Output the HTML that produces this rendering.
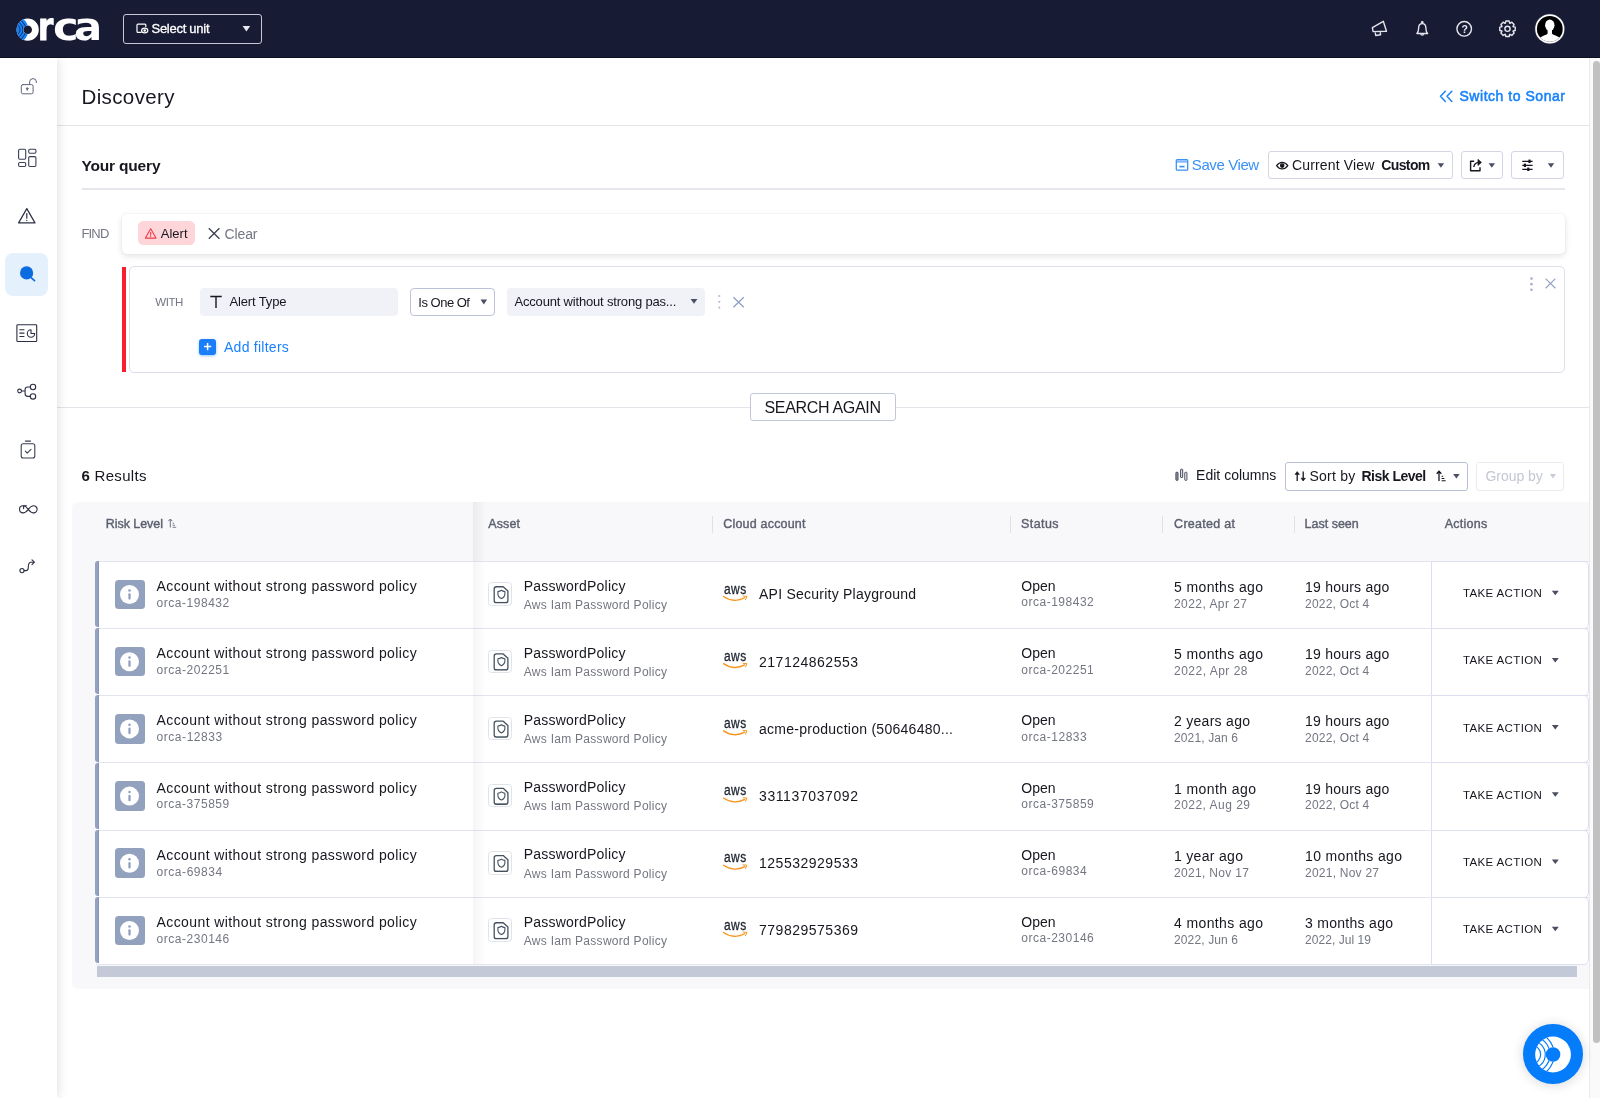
<!DOCTYPE html>
<html lang="en"><head><meta charset="utf-8"><title>Orca Security - Discovery</title>
<style>
*{box-sizing:border-box;margin:0;padding:0}
html,body{width:1600px;height:1098px;overflow:hidden;background:#fff}
body{position:relative;font-family:"Liberation Sans",sans-serif;color:#1f2235}
.t{position:absolute;white-space:pre;display:block}
.b{position:absolute;display:block}
svg.ov{position:absolute;left:0;top:0;width:1600px;height:1098px;pointer-events:none;overflow:visible}
.tl{position:absolute;left:0;top:0;width:1600px;height:1098px;will-change:transform}

</style></head>
<body>
<div class="b" style="left:57.00px;top:125.00px;width:1533.00px;height:1.00px;background:#e3e4e9"></div>
<div class="b" style="left:82.00px;top:188.00px;width:1483.00px;height:1.50px;background:#e6e7ec"></div>
<div class="b" style="left:57.00px;top:407.00px;width:1533.00px;height:1.00px;background:#e3e4e9"></div>
<div class="b" style="left:1589.30px;top:58.00px;width:10.70px;height:1040.00px;background:#fafafa;border-left:1px solid #ebebeb"></div>
<div class="b" style="left:1593.00px;top:61.00px;width:7.20px;height:982.00px;background:#c1c1c1;border-radius:3.6px"></div>
<div class="b" style="left:1267.60px;top:151.00px;width:185.80px;height:27.80px;background:#fff;border:1px solid #d3d6e2;border-radius:3px"></div>
<div class="b" style="left:1461.30px;top:151.00px;width:42.00px;height:27.80px;background:#fff;border:1px solid #d3d6e2;border-radius:3px"></div>
<div class="b" style="left:1511.20px;top:151.00px;width:53.30px;height:27.80px;background:#fff;border:1px solid #d3d6e2;border-radius:3px"></div>
<div class="b" style="left:122.00px;top:214.00px;width:1443.00px;height:39.50px;background:#fff;border-radius:5px;box-shadow:0 2px 6px rgba(20,20,40,.12),0 0 2px rgba(20,20,40,.05)"></div>
<div class="b" style="left:138.00px;top:221.30px;width:56.60px;height:23.80px;background:#fed6d9;border-radius:5.5px"></div>
<div class="b" style="left:122.00px;top:267.00px;width:3.50px;height:105.00px;background:#fa1e2e"></div>
<div class="b" style="left:129.00px;top:266.30px;width:1436.00px;height:106.40px;background:#fff;border:1px solid #dcdee8;border-radius:5px"></div>
<div class="b" style="left:200.00px;top:288.00px;width:197.50px;height:27.50px;background:#f0f2f7;border-radius:4px"></div>
<div class="b" style="left:410.00px;top:288.00px;width:84.50px;height:27.50px;background:#fff;border:1px solid #bcc3d8;border-radius:4px"></div>
<div class="b" style="left:507.00px;top:288.00px;width:198.00px;height:27.50px;background:#f0f2f7;border-radius:4px"></div>
<div class="b" style="left:199.30px;top:338.80px;width:16.50px;height:15.80px;background:#1a7efb;border-radius:3px;box-shadow:0 1px 3px rgba(26,126,251,.45)"></div>
<div class="b" style="left:750.30px;top:393.00px;width:146.00px;height:28.30px;background:#fff;border:1px solid #c2c7da;border-radius:3px"></div>
<div class="b" style="left:1285.00px;top:461.50px;width:182.50px;height:29.20px;background:#fff;border:1px solid #b9c0d8;border-radius:3px"></div>
<div class="b" style="left:1476.30px;top:461.50px;width:88.00px;height:29.20px;background:#fff;border:1px solid #e9ebf1;border-radius:3px"></div>
<div class="b" style="left:72.30px;top:501.70px;width:1516.50px;height:487.00px;background:#f8f8fa;border-radius:6px 0 0 6px"></div>
<div class="b" style="left:712.00px;top:516.00px;width:1.00px;height:16.50px;background:#dfe1e9"></div>
<div class="b" style="left:1009.50px;top:516.00px;width:1.00px;height:16.50px;background:#dfe1e9"></div>
<div class="b" style="left:1162.30px;top:516.00px;width:1.00px;height:16.50px;background:#dfe1e9"></div>
<div class="b" style="left:1293.50px;top:516.00px;width:1.00px;height:16.50px;background:#dfe1e9"></div>
<div class="b" style="left:96.00px;top:560.75px;width:1493.00px;height:67.20px;background:#fff;border-top:1px solid #e2e5f0;border-radius:3px 0 0 3px"></div>
<div class="b" style="left:95.00px;top:560.95px;width:4.00px;height:66.30px;background:linear-gradient(90deg,#92a2c0 0,#92a2c0 70%,#7f8fb6 100%);border-radius:3px 0 0 3px"></div>
<div class="b" style="left:115.30px;top:579.65px;width:29.40px;height:29.50px;background:#92a2be;border-radius:3.5px"></div>
<div class="b" style="left:488.20px;top:582.45px;width:23.80px;height:23.40px;background:#fff;border:1px solid #e1e3ea;border-radius:3.5px"></div>
<div class="b" style="left:1431.20px;top:560.75px;width:158.30px;height:68.20px;background:#fff;border:1px solid #dcdff0;border-radius:0 5px 5px 0"></div>
<div class="b" style="left:96.00px;top:627.95px;width:1493.00px;height:67.20px;background:#fff;border-top:1px solid #e2e5f0;border-radius:3px 0 0 3px"></div>
<div class="b" style="left:95.00px;top:628.15px;width:4.00px;height:66.30px;background:linear-gradient(90deg,#92a2c0 0,#92a2c0 70%,#7f8fb6 100%);border-radius:3px 0 0 3px"></div>
<div class="b" style="left:115.30px;top:646.85px;width:29.40px;height:29.50px;background:#92a2be;border-radius:3.5px"></div>
<div class="b" style="left:488.20px;top:649.65px;width:23.80px;height:23.40px;background:#fff;border:1px solid #e1e3ea;border-radius:3.5px"></div>
<div class="b" style="left:1431.20px;top:627.95px;width:158.30px;height:68.20px;background:#fff;border:1px solid #dcdff0;border-radius:0 5px 5px 0"></div>
<div class="b" style="left:96.00px;top:695.15px;width:1493.00px;height:67.20px;background:#fff;border-top:1px solid #e2e5f0;border-radius:3px 0 0 3px"></div>
<div class="b" style="left:95.00px;top:695.35px;width:4.00px;height:66.30px;background:linear-gradient(90deg,#92a2c0 0,#92a2c0 70%,#7f8fb6 100%);border-radius:3px 0 0 3px"></div>
<div class="b" style="left:115.30px;top:714.05px;width:29.40px;height:29.50px;background:#92a2be;border-radius:3.5px"></div>
<div class="b" style="left:488.20px;top:716.85px;width:23.80px;height:23.40px;background:#fff;border:1px solid #e1e3ea;border-radius:3.5px"></div>
<div class="b" style="left:1431.20px;top:695.15px;width:158.30px;height:68.20px;background:#fff;border:1px solid #dcdff0;border-radius:0 5px 5px 0"></div>
<div class="b" style="left:96.00px;top:762.35px;width:1493.00px;height:67.20px;background:#fff;border-top:1px solid #e2e5f0;border-radius:3px 0 0 3px"></div>
<div class="b" style="left:95.00px;top:762.55px;width:4.00px;height:66.30px;background:linear-gradient(90deg,#92a2c0 0,#92a2c0 70%,#7f8fb6 100%);border-radius:3px 0 0 3px"></div>
<div class="b" style="left:115.30px;top:781.25px;width:29.40px;height:29.50px;background:#92a2be;border-radius:3.5px"></div>
<div class="b" style="left:488.20px;top:784.05px;width:23.80px;height:23.40px;background:#fff;border:1px solid #e1e3ea;border-radius:3.5px"></div>
<div class="b" style="left:1431.20px;top:762.35px;width:158.30px;height:68.20px;background:#fff;border:1px solid #dcdff0;border-radius:0 5px 5px 0"></div>
<div class="b" style="left:96.00px;top:829.55px;width:1493.00px;height:67.20px;background:#fff;border-top:1px solid #e2e5f0;border-radius:3px 0 0 3px"></div>
<div class="b" style="left:95.00px;top:829.75px;width:4.00px;height:66.30px;background:linear-gradient(90deg,#92a2c0 0,#92a2c0 70%,#7f8fb6 100%);border-radius:3px 0 0 3px"></div>
<div class="b" style="left:115.30px;top:848.45px;width:29.40px;height:29.50px;background:#92a2be;border-radius:3.5px"></div>
<div class="b" style="left:488.20px;top:851.25px;width:23.80px;height:23.40px;background:#fff;border:1px solid #e1e3ea;border-radius:3.5px"></div>
<div class="b" style="left:1431.20px;top:829.55px;width:158.30px;height:68.20px;background:#fff;border:1px solid #dcdff0;border-radius:0 5px 5px 0"></div>
<div class="b" style="left:96.00px;top:896.75px;width:1493.00px;height:67.20px;background:#fff;border-top:1px solid #e2e5f0;border-radius:3px 0 0 3px"></div>
<div class="b" style="left:95.00px;top:896.95px;width:4.00px;height:66.30px;background:linear-gradient(90deg,#92a2c0 0,#92a2c0 70%,#7f8fb6 100%);border-radius:3px 0 0 3px"></div>
<div class="b" style="left:115.30px;top:915.65px;width:29.40px;height:29.50px;background:#92a2be;border-radius:3.5px"></div>
<div class="b" style="left:488.20px;top:918.45px;width:23.80px;height:23.40px;background:#fff;border:1px solid #e1e3ea;border-radius:3.5px"></div>
<div class="b" style="left:1431.20px;top:896.75px;width:158.30px;height:68.20px;background:#fff;border:1px solid #dcdff0;border-radius:0 5px 5px 0"></div>
<div class="b" style="left:96.00px;top:963.95px;width:1335.00px;height:1.00px;background:#e2e5f0"></div>
<div class="b" style="left:473.00px;top:501.70px;width:13.00px;height:59.05px;background:linear-gradient(90deg,rgba(20,20,40,.055),rgba(20,20,40,0))"></div>
<div class="b" style="left:473.00px;top:560.75px;width:13.00px;height:403.20px;background:linear-gradient(90deg,rgba(20,20,40,.045),rgba(20,20,40,0))"></div>
<div class="b" style="left:96.70px;top:965.70px;width:1480.50px;height:11.60px;background:#c3c9d7"></div>
<div class="b" style="left:0.00px;top:58.00px;width:57.00px;height:1040.00px;background:#fff;box-shadow:1px 0 10px rgba(0,0,0,.13)"></div>
<div class="b" style="left:5.20px;top:253.20px;width:43.30px;height:43.20px;background:#e5f0fd;border-radius:8px"></div>
<div class="b" style="left:0.00px;top:0.00px;width:1600.00px;height:58.00px;background:#181b34"></div>
<div class="b" style="left:0.00px;top:57.00px;width:1600.00px;height:1.00px;background:#0c0e22"></div>
<div class="b" style="left:123.20px;top:13.60px;width:138.60px;height:30.00px;border:1px solid #c6c8d3;border-radius:3px"></div>
<div class="b" style="left:1523.40px;top:1024.30px;width:59.50px;height:59.50px;background:#057cf9;border-radius:50%;box-shadow:0 1px 12px rgba(0,0,0,.16)"></div>
<svg class="ov" viewBox="0 0 1600 1098">
<g><clipPath id="logoring"><path d="M16.60 29.7a11.1 11.1 0 1 0 22.20 0a11.1 11.1 0 1 0 -22.20 0zM23.40 29.7a4.3 4.3 0 1 0 8.60 0a4.3 4.3 0 1 0 -8.60 0z" clip-rule="evenodd"/></clipPath><path d="M16.60 29.7a11.1 11.1 0 1 0 22.20 0a11.1 11.1 0 1 0 -22.20 0zM23.40 29.7a4.3 4.3 0 1 0 8.60 0a4.3 4.3 0 1 0 -8.60 0z" fill-rule="evenodd" fill="#ffffff"/><g clip-path="url(#logoring)"><circle cx="14.21" cy="29.7" r="14.14" fill="#1683fb"/><circle cx="14.21" cy="29.7" r="5.80" fill="none" stroke="#181b34" stroke-width="0.8"/><circle cx="14.21" cy="29.7" r="8.68" fill="none" stroke="#181b34" stroke-width="0.8"/><circle cx="14.21" cy="29.7" r="11.53" fill="none" stroke="#181b34" stroke-width="0.8"/></g></g>
<g fill="none" stroke="#ffffff" stroke-width="1.200"><path d="M141.600 32.300h-3.700a.900.900 0 0 1-.900-.900v-6.400a.900.900 0 0 1 .900-.900h7a.900.900 0 0 1 .900.900v2"/><ellipse cx="144.700" cy="30.500" rx="3.100" ry="2.300"/><circle cx="144.700" cy="30.500" r="0.750" fill="#ffffff"/></g>
<path d="M242.60 26.00h7.60l-3.80 5.40z" fill="#e8e9ee"/>
<g fill="none" stroke="#e4e5ec" stroke-width="1.400" stroke-linejoin="round" stroke-linecap="round"><path d="M1372.400 27.600l10.900-6.300 3.200 10-13.400.300z"/><path d="M1375.300 33l.400 2.500 4.900-.800-.300-1.900"/></g>
<g fill="none" stroke="#e4e5ec" stroke-width="1.400" stroke-linejoin="round" stroke-linecap="round"><path d="M1416.900 33.500c1.400-1.200 1.700-2.600 1.700-5.200 0-3.200 1.600-4.700 3.650-4.700s3.650 1.500 3.650 4.700c0 2.600.300 4 1.700 5.200z"/><path d="M1420.700 33.700a1.600 1.900 0 0 0 3.100 0"/><circle cx="1422.250" cy="22.300" r="0.700"/></g>
<circle cx="1464.2" cy="28.8" r="7.3" fill="none" stroke="#e6e7ee" stroke-width="1.4"/>
<path d="M1515.23 27.15L1515.23 30.45L1513.09 30.97L1512.99 31.22L1514.13 33.10L1511.80 35.43L1509.92 34.29L1509.67 34.39L1509.15 36.53L1505.85 36.53L1505.33 34.39L1505.08 34.29L1503.20 35.43L1500.87 33.10L1502.01 31.22L1501.91 30.97L1499.77 30.45L1499.77 27.15L1501.91 26.63L1502.01 26.38L1500.87 24.50L1503.20 22.17L1505.08 23.31L1505.33 23.21L1505.85 21.07L1509.15 21.07L1509.67 23.21L1509.92 23.31L1511.80 22.17L1514.13 24.50L1512.99 26.38L1513.09 26.63z" fill="none" stroke="#e6e7ee" stroke-width="1.4" stroke-linejoin="round"/>
<circle cx="1507.5" cy="28.8" r="2.6" fill="none" stroke="#e6e7ee" stroke-width="1.4"/>
<g><circle cx="1549.8" cy="28.9" r="15.4" fill="#2a2d48"/><circle cx="1549.8" cy="28.9" r="14.6" fill="#fff"/><circle cx="1549.8" cy="28.9" r="12.9" fill="#000"/>
<clipPath id="avc"><circle cx="1549.8" cy="28.9" r="12.9"/></clipPath>
<g clip-path="url(#avc)" fill="#fff"><ellipse cx="1549.8" cy="25.3" rx="4.7" ry="5.7"/><path d="M1547.6 29h4.400v4.500c0 1.200 6.800 2.200 8.600 5.500v6h-21.600v-6c1.800-3.300 8.600-4.300 8.600-5.500z"/></g></g>
<g fill="none" stroke="#60657a" stroke-width="1.0" stroke-linecap="round" stroke-linejoin="round"><rect x="21.3" y="84.6" width="11.8" height="9.2" rx="1.6"/><path d="M29.600 84.600v-2.600a3.400 3.400 0 0 1 6.800 0v.6"/><circle cx="27.2" cy="88.6" r="0.8" fill="#555a70"/><path d="M27.200 89v1.400"/></g>
<g fill="none" stroke="#3a3f55" stroke-width="1.1" stroke-linecap="round" stroke-linejoin="round"><rect x="18.6" y="149.300" width="7.1" height="9.900" rx="1.2"/><rect x="18.6" y="162.500" width="7.100" height="4" rx="1.200"/><rect x="28.700" y="149.300" width="7.200" height="4" rx="1.200"/><rect x="28.700" y="156.600" width="7.200" height="9.900" rx="1.200"/></g>
<g fill="none" stroke="#2b2f42" stroke-width="1.2" stroke-linecap="round" stroke-linejoin="round"><path d="M26.800 208.600l8.200 14.300h-16.400z"/><path d="M26.800 213.600v4.600"/><path d="M26.800 220.300v.3"/></g>
<circle cx="26.6" cy="272.900" r="6.600" fill="#0a6ce0"/><path d="M30.500 277.200l4 3.400" stroke="#0a6ce0" stroke-width="1.700" stroke-linecap="round"/>
<g fill="none" stroke="#2b2f42" stroke-width="1.1" stroke-linecap="round" stroke-linejoin="round"><rect x="16.900" y="324.800" width="19.800" height="16.700" rx="0.800"/><path d="M19.800 329.700h4.200M19.800 333.100h4.200M19.800 336.500h4.200"/><path d="M31 329.800a3.700 3.700 0 1 0 3.700 3.700h-3.700z"/></g>
<g fill="none" stroke="#2b2f42" stroke-width="1.1" stroke-linecap="round" stroke-linejoin="round"><circle cx="19.600" cy="391" r="1.900"/><circle cx="33" cy="387" r="2.700"/><circle cx="33" cy="396.400" r="2.700"/><path d="M21.500 391h3.600M30.300 387h-2.600a2.600 2.600 0 0 0-2.600 2.600v4.200a2.600 2.600 0 0 0 2.600 2.600h2.600"/></g>
<g fill="none" stroke="#3a3f55" stroke-width="1.1" stroke-linecap="round" stroke-linejoin="round"><rect x="21.200" y="443.700" width="13.600" height="14.300" rx="2"/><path d="M25.300 441.100h5.300"/><path d="M25.300 451.200l1.900 1.900 3.800-3.800"/></g>
<g fill="none" stroke="#2b2f42" stroke-width="1.1" stroke-linecap="round" stroke-linejoin="round"><path d="M28.300 509.300c-2-2.600-3.400-3.600-5.200-3.600a3.600 3.600 0 0 0 0 7.200c1.800 0 3.200-1 5.200-3.600s3.400-3.600 5.200-3.600a3.600 3.600 0 0 1 0 7.200c-1.800 0-3.200-1-5.200-3.600z"/><path d="M23.600 508.600v-2.900h2.900"/></g>
<g fill="none" stroke="#2b2f42" stroke-width="1.1" stroke-linecap="round" stroke-linejoin="round"><circle cx="22" cy="570.600" r="2.100"/><path d="M24.100 570.600h1.800c2 0 2.400-1.200 2.400-3.200s.6-5.200 2.600-5.200h3"/><path d="M32 559.800l2.400 2.400-2.400 2.400"/></g>
<path d="M1445.300 91.200l-4.800 5.100 4.800 5.100M1451.800 91.200l-4.800 5.100 4.800 5.100" fill="none" stroke="#1a82fb" stroke-width="1.500" stroke-linecap="round" stroke-linejoin="round"/>
<g fill="none" stroke="#3990f7" stroke-width="1.300"><rect x="1176.300" y="159.600" width="11.400" height="10.600" rx="1"/><path d="M1176.900 161.500h10.200" stroke-width="2.400" stroke="#86b8fb"/><path d="M1179.400 166.600h5.200" stroke-width="1.600"/></g>
<g fill="none" stroke="#16171f" stroke-width="1.200"><path d="M1276.600 165.600c1.600-2.300 3.400-3.300 5.600-3.300s4 1 5.600 3.300c-1.600 2.300-3.400 3.300-5.600 3.300s-4-1-5.600-3.300z"/><circle cx="1282.200" cy="165.600" r="1.700" fill="#16171f"/></g>
<path d="M1437.70 163.30h6.40l-3.20 4.40z" fill="#4a4f63"/>
<g fill="none" stroke="#16171f" stroke-width="1.400" stroke-linejoin="round"><path d="M1474.200 161.300h-3.600v9.400h9.400v-3.400"/><path d="M1473.800 167c.4-2.800 2.200-4.400 5-4.600" /><path d="M1478 159.400l3.400 3-3.400 3z" fill="#16171f" stroke-width="0.800"/></g>
<path d="M1488.60 163.30h6.40l-3.20 4.40z" fill="#4a4f63"/>
<g fill="none" stroke="#16171f" stroke-width="1.300"><path d="M1522.300 161.300h10.300M1522.300 165.300h10.300M1522.300 169.300h10.300"/><g fill="#16171f" stroke="none"><rect x="1528.400" y="159.600" width="2.200" height="3.400"/><rect x="1523.800" y="163.600" width="2.200" height="3.400"/><rect x="1527.200" y="167.600" width="2.200" height="3.400"/></g></g>
<path d="M1547.80 163.30h6.40l-3.20 4.40z" fill="#4a4f63"/>
<g fill="none" stroke="#f03a47" stroke-width="1.100" stroke-linejoin="round" stroke-linecap="round"><path d="M150.700 228.800l5.300 9.300h-10.600z"/><path d="M150.700 232.300v2.800M150.700 236.400v.2"/></g>
<path d="M208.800 228.300l10.600 10.400M219.400 228.300l-10.600 10.400" stroke="#3b4054" stroke-width="1.300" fill="none"/>
<path d="M210.300 296.500h11.400M216 296.500v11.400" stroke="#16171f" stroke-width="1.400" fill="none"/>
<path d="M480.55 299.60h6.50l-3.25 4.80z" fill="#4a4f63"/>
<path d="M690.60 298.90h6.80l-3.40 4.80z" fill="#4a4f63"/>
<g fill="#b6bdd2"><circle cx="719.300" cy="296" r="1.100"/><circle cx="719.300" cy="301.800" r="1.100"/><circle cx="719.300" cy="307.600" r="1.100"/></g>
<path d="M733.400 297.300l10.400 10M743.800 297.300l-10.400 10" stroke="#8d9cc2" stroke-width="1.200" fill="none"/>
<g fill="#a9b3cd"><circle cx="1531.500" cy="278.600" r="1.350"/><circle cx="1531.500" cy="284.200" r="1.350"/><circle cx="1531.500" cy="289.800" r="1.350"/></g>
<path d="M1545.600 278.600l9.800 9.600M1555.400 278.600l-9.800 9.600" stroke="#98a4c4" stroke-width="1.200" fill="none"/>
<path d="M204 346.600h7.200M207.600 343v7.200" stroke="#fff" stroke-width="1.500" fill="none"/>
<g stroke="#33384c" stroke-width="0.900"><rect x="1175.900" y="472.300" width="2.100" height="8" rx="0.500" fill="#9a9da8"/><rect x="1180.600" y="469.200" width="2.100" height="8.300" rx="0.500" fill="#e9eaee"/><rect x="1184.800" y="472.300" width="2.100" height="8" rx="0.500" fill="#fff"/></g>
<g fill="#16171f" stroke="#16171f" stroke-width="1.300"><path d="M1297.200 481v-7" fill="none"/><path d="M1295 474.400l2.200-2.800 2.200 2.800z" stroke-width="0.600"/><path d="M1303.200 471.600v7" fill="none"/><path d="M1301 478.200l2.200 2.800 2.200-2.800z" stroke-width="0.600"/></g>
<g fill="none" stroke="#16171f" stroke-width="1.300"><path d="M1439 481v-9.600M1436.700 473.800l2.300-2.600 2.300 2.600"/><path d="M1441.600 476.200h1.600M1441.600 478.500h2.800M1441.600 480.800h4" stroke-width="1.100"/></g>
<path d="M1453.10 473.90h6.60l-3.30 4.60z" fill="#4a4f63"/>
<path d="M1549.90 474.00h6.20l-3.10 4.40z" fill="#c9cdd8"/>
<g fill="none" stroke="#6a6f83" stroke-width="1"><path d="M170.300 527.500v-8.400M168.300 521.200l2-2.200 2 2.200"/><path d="M172.600 523.300h1.400M172.600 525.300h2.400M172.600 527.300h3.600" stroke-width="0.900"/></g>
<circle cx="129.500" cy="594.50" r="9.500" fill="#fff"/><circle cx="129.500" cy="590.40" r="1.250" fill="#8fa0bf"/><path d="M129.500 594.30v4.300" stroke="#8fa0bf" stroke-width="2.300" stroke-linecap="round"/>
<g fill="none" stroke="#44525f" stroke-width="1.300" stroke-linejoin="round"><path d="M496.400 586.75h6.800l4.700 4.300v9.400a2.200 2.200 0 0 1-2.200 2.200h-9.300a2.200 2.200 0 0 1-2.200-2.200v-11.500a2.200 2.200 0 0 1 2.200-2.200z"/><path d="M494.600 602.40h12.800" stroke-width="0.600"/><path d="M501.400 590.30c1.100.900 2.300 1.200 3.500 1.300v2.300c0 2.300-1.500 3.700-3.500 4.600-2-.9-3.500-2.300-3.500-4.600v-2.300c1.200-.1 2.400-.4 3.500-1.300z" stroke-width="1.100"/></g>
<path d="M723.600 596.45c6.400 4.800 14.600 5 21 1.300" fill="none" stroke="#f7941d" stroke-width="1.350" stroke-linecap="round"/><path d="M743.200 596.10l3.700.250-1.400 3.300" fill="none" stroke="#f7941d" stroke-width="1" stroke-linejoin="round" stroke-linecap="round"/>
<path d="M1551.85 590.70h6.90l-3.45 4.50z" fill="#4a4e60"/>
<circle cx="129.500" cy="661.70" r="9.500" fill="#fff"/><circle cx="129.500" cy="657.60" r="1.250" fill="#8fa0bf"/><path d="M129.500 661.50v4.300" stroke="#8fa0bf" stroke-width="2.300" stroke-linecap="round"/>
<g fill="none" stroke="#44525f" stroke-width="1.300" stroke-linejoin="round"><path d="M496.400 653.95h6.800l4.700 4.300v9.400a2.200 2.200 0 0 1-2.200 2.200h-9.300a2.200 2.200 0 0 1-2.200-2.200v-11.500a2.200 2.200 0 0 1 2.200-2.200z"/><path d="M494.600 669.60h12.800" stroke-width="0.600"/><path d="M501.400 657.50c1.100.900 2.300 1.200 3.500 1.300v2.300c0 2.300-1.500 3.700-3.500 4.600-2-.9-3.500-2.300-3.500-4.600v-2.300c1.200-.1 2.400-.4 3.500-1.300z" stroke-width="1.100"/></g>
<path d="M723.600 663.65c6.400 4.800 14.600 5 21 1.300" fill="none" stroke="#f7941d" stroke-width="1.350" stroke-linecap="round"/><path d="M743.200 663.30l3.700.250-1.400 3.300" fill="none" stroke="#f7941d" stroke-width="1" stroke-linejoin="round" stroke-linecap="round"/>
<path d="M1551.85 657.90h6.90l-3.45 4.50z" fill="#4a4e60"/>
<circle cx="129.500" cy="728.90" r="9.500" fill="#fff"/><circle cx="129.500" cy="724.80" r="1.250" fill="#8fa0bf"/><path d="M129.500 728.70v4.300" stroke="#8fa0bf" stroke-width="2.300" stroke-linecap="round"/>
<g fill="none" stroke="#44525f" stroke-width="1.300" stroke-linejoin="round"><path d="M496.400 721.15h6.800l4.700 4.300v9.400a2.200 2.200 0 0 1-2.200 2.200h-9.300a2.200 2.200 0 0 1-2.200-2.200v-11.500a2.200 2.200 0 0 1 2.200-2.200z"/><path d="M494.600 736.80h12.800" stroke-width="0.600"/><path d="M501.400 724.70c1.100.900 2.300 1.200 3.500 1.300v2.300c0 2.300-1.500 3.700-3.500 4.600-2-.9-3.500-2.300-3.500-4.600v-2.300c1.200-.1 2.400-.4 3.500-1.300z" stroke-width="1.100"/></g>
<path d="M723.600 730.85c6.400 4.800 14.600 5 21 1.300" fill="none" stroke="#f7941d" stroke-width="1.350" stroke-linecap="round"/><path d="M743.200 730.50l3.700.250-1.400 3.300" fill="none" stroke="#f7941d" stroke-width="1" stroke-linejoin="round" stroke-linecap="round"/>
<path d="M1551.85 725.10h6.90l-3.45 4.50z" fill="#4a4e60"/>
<circle cx="129.500" cy="796.10" r="9.500" fill="#fff"/><circle cx="129.500" cy="792.00" r="1.250" fill="#8fa0bf"/><path d="M129.500 795.90v4.300" stroke="#8fa0bf" stroke-width="2.300" stroke-linecap="round"/>
<g fill="none" stroke="#44525f" stroke-width="1.300" stroke-linejoin="round"><path d="M496.400 788.35h6.800l4.700 4.300v9.400a2.200 2.200 0 0 1-2.200 2.200h-9.300a2.200 2.200 0 0 1-2.200-2.200v-11.500a2.200 2.200 0 0 1 2.200-2.200z"/><path d="M494.600 804.00h12.800" stroke-width="0.600"/><path d="M501.400 791.90c1.100.900 2.300 1.200 3.500 1.300v2.300c0 2.300-1.500 3.700-3.500 4.600-2-.9-3.500-2.300-3.500-4.600v-2.300c1.200-.1 2.400-.4 3.500-1.300z" stroke-width="1.100"/></g>
<path d="M723.600 798.05c6.400 4.800 14.600 5 21 1.300" fill="none" stroke="#f7941d" stroke-width="1.350" stroke-linecap="round"/><path d="M743.200 797.70l3.700.250-1.400 3.300" fill="none" stroke="#f7941d" stroke-width="1" stroke-linejoin="round" stroke-linecap="round"/>
<path d="M1551.85 792.30h6.90l-3.45 4.50z" fill="#4a4e60"/>
<circle cx="129.500" cy="863.30" r="9.500" fill="#fff"/><circle cx="129.500" cy="859.20" r="1.250" fill="#8fa0bf"/><path d="M129.500 863.10v4.300" stroke="#8fa0bf" stroke-width="2.300" stroke-linecap="round"/>
<g fill="none" stroke="#44525f" stroke-width="1.300" stroke-linejoin="round"><path d="M496.400 855.55h6.800l4.700 4.300v9.400a2.200 2.200 0 0 1-2.200 2.200h-9.300a2.200 2.200 0 0 1-2.200-2.200v-11.500a2.200 2.200 0 0 1 2.200-2.200z"/><path d="M494.600 871.20h12.800" stroke-width="0.600"/><path d="M501.400 859.10c1.100.900 2.300 1.200 3.500 1.300v2.300c0 2.300-1.500 3.700-3.500 4.600-2-.9-3.500-2.300-3.500-4.600v-2.300c1.200-.1 2.400-.4 3.500-1.300z" stroke-width="1.100"/></g>
<path d="M723.600 865.25c6.400 4.800 14.600 5 21 1.300" fill="none" stroke="#f7941d" stroke-width="1.350" stroke-linecap="round"/><path d="M743.200 864.90l3.700.250-1.400 3.300" fill="none" stroke="#f7941d" stroke-width="1" stroke-linejoin="round" stroke-linecap="round"/>
<path d="M1551.85 859.50h6.90l-3.45 4.50z" fill="#4a4e60"/>
<circle cx="129.500" cy="930.50" r="9.500" fill="#fff"/><circle cx="129.500" cy="926.40" r="1.250" fill="#8fa0bf"/><path d="M129.500 930.30v4.300" stroke="#8fa0bf" stroke-width="2.300" stroke-linecap="round"/>
<g fill="none" stroke="#44525f" stroke-width="1.300" stroke-linejoin="round"><path d="M496.400 922.75h6.800l4.700 4.300v9.400a2.200 2.200 0 0 1-2.200 2.200h-9.300a2.200 2.200 0 0 1-2.200-2.200v-11.500a2.200 2.200 0 0 1 2.200-2.200z"/><path d="M494.600 938.40h12.800" stroke-width="0.600"/><path d="M501.400 926.30c1.100.900 2.300 1.200 3.500 1.300v2.300c0 2.300-1.500 3.700-3.500 4.600-2-.9-3.500-2.300-3.500-4.600v-2.300c1.200-.1 2.400-.4 3.500-1.300z" stroke-width="1.100"/></g>
<path d="M723.600 932.45c6.400 4.800 14.600 5 21 1.300" fill="none" stroke="#f7941d" stroke-width="1.350" stroke-linecap="round"/><path d="M743.200 932.10l3.700.250-1.400 3.300" fill="none" stroke="#f7941d" stroke-width="1" stroke-linejoin="round" stroke-linecap="round"/>
<path d="M1551.85 926.70h6.90l-3.45 4.50z" fill="#4a4e60"/>
<g><clipPath id="chatring"><path d="M1535.15 1054.5a17.9 17.9 0 1 0 35.80 0a17.9 17.9 0 1 0 -35.80 0zM1545.75 1054.5a7.3 7.3 0 1 0 14.60 0a7.3 7.3 0 1 0 -14.60 0z" clip-rule="evenodd"/></clipPath><path d="M1535.15 1054.5a17.9 17.9 0 1 0 35.80 0a17.9 17.9 0 1 0 -35.80 0zM1545.75 1054.5a7.3 7.3 0 1 0 14.60 0a7.3 7.3 0 1 0 -14.60 0z" fill-rule="evenodd" fill="#fff"/><g clip-path="url(#chatring)"><circle cx="1531.30" cy="1054.5" r="9.35" fill="none" stroke="#057cf9" stroke-width="1.2"/><circle cx="1531.30" cy="1054.5" r="14.00" fill="none" stroke="#057cf9" stroke-width="1.2"/><circle cx="1531.30" cy="1054.5" r="18.60" fill="none" stroke="#057cf9" stroke-width="1.2"/><circle cx="1531.30" cy="1054.5" r="22.80" fill="none" stroke="#057cf9" stroke-width="1.2"/></g></g>
</svg>
<div class="tl">
<span class="t" style="left:151.50px;top:22.00px;font-size:13px;line-height:13px;letter-spacing:-0.270px;color:#ffffff;-webkit-text-stroke:0.3px #fff;">Select unit</span>
<span class="t" style="left:38.00px;top:9.00px;font-size:37px;line-height:37px;letter-spacing:1.750px;color:#ffffff;font-weight:700;font-family:'DejaVu Sans',sans-serif;transform:scaleX(0.84);transform-origin:0 0;letter-spacing:0;-webkit-text-stroke:0.9px #fff;">r</span>
<span class="t" style="left:53.07px;top:9.00px;font-size:37px;line-height:37px;letter-spacing:-1.938px;color:#ffffff;font-weight:700;font-family:'DejaVu Sans',sans-serif;transform:scaleX(1.173);transform-origin:0 0;letter-spacing:0;">c</span>
<span class="t" style="left:74.45px;top:9.00px;font-size:37px;line-height:37px;letter-spacing:-4.969px;color:#ffffff;font-weight:700;font-family:'DejaVu Sans',sans-serif;transform:scaleX(1.129);transform-origin:0 0;letter-spacing:0;">a</span>
<span class="t" style="left:1461.60px;top:23.71px;font-size:10.5px;line-height:10.5px;letter-spacing:-1.222px;color:#e6e7ee;font-weight:700;">?</span>
<span class="t" style="left:81.50px;top:87.15px;font-size:20.5px;line-height:20.5px;letter-spacing:0.375px;color:#16171f;">Discovery</span>
<span class="t" style="left:1459.50px;top:88.85px;font-size:14px;line-height:14px;letter-spacing:0.531px;color:#1a82fb;-webkit-text-stroke:0.55px #1a82fb;">Switch to Sonar</span>
<span class="t" style="left:81.50px;top:157.88px;font-size:15.5px;line-height:15.5px;letter-spacing:-0.186px;color:#16171f;font-weight:700;">Your query</span>
<span class="t" style="left:1191.80px;top:156.90px;font-size:15px;line-height:15px;letter-spacing:-0.401px;color:#3990f7;">Save View</span>
<span class="t" style="left:1292.00px;top:158.15px;font-size:14px;line-height:14px;letter-spacing:0.157px;color:#16171f;">Current View</span>
<span class="t" style="left:1381.30px;top:158.15px;font-size:14px;line-height:14px;letter-spacing:-0.625px;color:#16171f;font-weight:700;">Custom</span>
<span class="t" style="left:81.50px;top:227.00px;font-size:13px;line-height:13px;letter-spacing:-0.848px;color:#747782;">FIND</span>
<span class="t" style="left:160.80px;top:227.00px;font-size:13px;line-height:13px;letter-spacing:-0.009px;color:#16171f;">Alert</span>
<span class="t" style="left:224.50px;top:226.90px;font-size:14px;line-height:14px;letter-spacing:-0.117px;color:#747782;">Clear</span>
<span class="t" style="left:155.30px;top:296.57px;font-size:11.5px;line-height:11.5px;letter-spacing:-0.464px;color:#747782;">WITH</span>
<span class="t" style="left:229.50px;top:295.25px;font-size:13px;line-height:13px;letter-spacing:-0.144px;color:#16171f;">Alert Type</span>
<span class="t" style="left:418.30px;top:296.00px;font-size:13px;line-height:13px;letter-spacing:-0.493px;color:#16171f;">Is One Of</span>
<span class="t" style="left:514.50px;top:295.30px;font-size:13px;line-height:13px;letter-spacing:-0.183px;color:#16171f;">Account without strong pas...</span>
<span class="t" style="left:224.00px;top:340.15px;font-size:14px;line-height:14px;letter-spacing:0.255px;color:#1a82fb;">Add filters</span>
<span class="t" style="left:764.50px;top:399.86px;font-size:16px;line-height:16px;letter-spacing:-0.321px;color:#16171f;">SEARCH AGAIN</span>
<span class="t" style="left:81.50px;top:468.30px;font-size:15px;line-height:15px;letter-spacing:0.656px;color:#16171f;font-weight:700;">6</span>
<span class="t" style="left:94.50px;top:468.30px;font-size:15px;line-height:15px;letter-spacing:0.328px;color:#16171f;">Results</span>
<span class="t" style="left:1196.10px;top:468.45px;font-size:14px;line-height:14px;letter-spacing:0.004px;color:#16171f;">Edit columns</span>
<span class="t" style="left:1309.50px;top:469.15px;font-size:14px;line-height:14px;letter-spacing:0.240px;color:#16171f;">Sort by</span>
<span class="t" style="left:1361.50px;top:469.15px;font-size:14px;line-height:14px;letter-spacing:-0.507px;color:#16171f;font-weight:700;">Risk Level</span>
<span class="t" style="left:1485.50px;top:469.15px;font-size:14px;line-height:14px;letter-spacing:-0.042px;color:#c3c7d2;">Group by</span>
<span class="t" style="left:105.75px;top:517.62px;font-size:12.5px;line-height:12.5px;letter-spacing:-0.047px;color:#5c5f6e;-webkit-text-stroke:0.4px #5c5f6e;">Risk Level</span>
<span class="t" style="left:488.25px;top:517.62px;font-size:12.5px;line-height:12.5px;letter-spacing:0.121px;color:#5c5f6e;-webkit-text-stroke:0.4px #5c5f6e;">Asset</span>
<span class="t" style="left:723.25px;top:517.62px;font-size:12.5px;line-height:12.5px;letter-spacing:0.194px;color:#5c5f6e;-webkit-text-stroke:0.4px #5c5f6e;">Cloud account</span>
<span class="t" style="left:1021.00px;top:517.62px;font-size:12.5px;line-height:12.5px;letter-spacing:0.412px;color:#5c5f6e;-webkit-text-stroke:0.4px #5c5f6e;">Status</span>
<span class="t" style="left:1174.10px;top:517.62px;font-size:12.5px;line-height:12.5px;letter-spacing:0.281px;color:#5c5f6e;-webkit-text-stroke:0.4px #5c5f6e;">Created at</span>
<span class="t" style="left:1304.50px;top:517.62px;font-size:12.5px;line-height:12.5px;letter-spacing:0.010px;color:#5c5f6e;-webkit-text-stroke:0.4px #5c5f6e;">Last seen</span>
<span class="t" style="left:1444.70px;top:517.62px;font-size:12.5px;line-height:12.5px;letter-spacing:0.267px;color:#5c5f6e;-webkit-text-stroke:0.4px #5c5f6e;">Actions</span>
<span class="t" style="left:156.50px;top:578.90px;font-size:14px;line-height:14px;letter-spacing:0.409px;color:#16171f;">Account without strong password policy</span>
<span class="t" style="left:156.50px;top:596.84px;font-size:12px;line-height:12px;letter-spacing:0.536px;color:#747782;">orca-198432</span>
<span class="t" style="left:523.75px;top:578.65px;font-size:14px;line-height:14px;letter-spacing:0.225px;color:#16171f;">PasswordPolicy</span>
<span class="t" style="left:523.75px;top:598.84px;font-size:12px;line-height:12px;letter-spacing:0.277px;color:#747782;">Aws Iam Password Policy</span>
<span class="t" style="left:759.00px;top:587.40px;font-size:14px;line-height:14px;letter-spacing:0.239px;color:#16171f;">API Security Playground</span>
<span class="t" style="left:1021.25px;top:578.90px;font-size:14px;line-height:14px;letter-spacing:0.000px;color:#16171f;">Open</span>
<span class="t" style="left:1021.25px;top:596.34px;font-size:12px;line-height:12px;letter-spacing:0.511px;color:#747782;">orca-198432</span>
<span class="t" style="left:1174.00px;top:579.90px;font-size:14px;line-height:14px;letter-spacing:0.378px;color:#16171f;">5 months ago</span>
<span class="t" style="left:1174.00px;top:597.84px;font-size:12px;line-height:12px;letter-spacing:0.449px;color:#747782;">2022, Apr 27</span>
<span class="t" style="left:1305.00px;top:579.90px;font-size:14px;line-height:14px;letter-spacing:0.229px;color:#16171f;">19 hours ago</span>
<span class="t" style="left:1305.00px;top:597.84px;font-size:12px;line-height:12px;letter-spacing:0.220px;color:#747782;">2022, Oct 4</span>
<span class="t" style="left:1462.90px;top:588.22px;font-size:11.5px;line-height:11.5px;letter-spacing:0.380px;color:#16171f;">TAKE ACTION</span>
<span class="t" style="left:723.90px;top:583.59px;font-size:12px;line-height:12px;letter-spacing:0.478px;color:#1d2430;transform:scaleY(1.15);transform-origin:0 84.65%;-webkit-text-stroke:0.25px #1d2430;">aws</span>
<span class="t" style="left:156.50px;top:646.10px;font-size:14px;line-height:14px;letter-spacing:0.409px;color:#16171f;">Account without strong password policy</span>
<span class="t" style="left:156.50px;top:664.04px;font-size:12px;line-height:12px;letter-spacing:0.536px;color:#747782;">orca-202251</span>
<span class="t" style="left:523.75px;top:645.85px;font-size:14px;line-height:14px;letter-spacing:0.225px;color:#16171f;">PasswordPolicy</span>
<span class="t" style="left:523.75px;top:666.04px;font-size:12px;line-height:12px;letter-spacing:0.277px;color:#747782;">Aws Iam Password Policy</span>
<span class="t" style="left:759.00px;top:654.60px;font-size:14px;line-height:14px;letter-spacing:0.506px;color:#16171f;">217124862553</span>
<span class="t" style="left:1021.25px;top:646.10px;font-size:14px;line-height:14px;letter-spacing:0.000px;color:#16171f;">Open</span>
<span class="t" style="left:1021.25px;top:663.54px;font-size:12px;line-height:12px;letter-spacing:0.511px;color:#747782;">orca-202251</span>
<span class="t" style="left:1174.00px;top:647.10px;font-size:14px;line-height:14px;letter-spacing:0.378px;color:#16171f;">5 months ago</span>
<span class="t" style="left:1174.00px;top:665.04px;font-size:12px;line-height:12px;letter-spacing:0.494px;color:#747782;">2022, Apr 28</span>
<span class="t" style="left:1305.00px;top:647.10px;font-size:14px;line-height:14px;letter-spacing:0.229px;color:#16171f;">19 hours ago</span>
<span class="t" style="left:1305.00px;top:665.04px;font-size:12px;line-height:12px;letter-spacing:0.220px;color:#747782;">2022, Oct 4</span>
<span class="t" style="left:1462.90px;top:655.42px;font-size:11.5px;line-height:11.5px;letter-spacing:0.380px;color:#16171f;">TAKE ACTION</span>
<span class="t" style="left:723.90px;top:650.79px;font-size:12px;line-height:12px;letter-spacing:0.478px;color:#1d2430;transform:scaleY(1.15);transform-origin:0 84.65%;-webkit-text-stroke:0.25px #1d2430;">aws</span>
<span class="t" style="left:156.50px;top:713.30px;font-size:14px;line-height:14px;letter-spacing:0.409px;color:#16171f;">Account without strong password policy</span>
<span class="t" style="left:156.50px;top:731.24px;font-size:12px;line-height:12px;letter-spacing:0.559px;color:#747782;">orca-12833</span>
<span class="t" style="left:523.75px;top:713.05px;font-size:14px;line-height:14px;letter-spacing:0.225px;color:#16171f;">PasswordPolicy</span>
<span class="t" style="left:523.75px;top:733.24px;font-size:12px;line-height:12px;letter-spacing:0.277px;color:#747782;">Aws Iam Password Policy</span>
<span class="t" style="left:759.00px;top:721.80px;font-size:14px;line-height:14px;letter-spacing:0.267px;color:#16171f;">acme-production (50646480...</span>
<span class="t" style="left:1021.25px;top:713.30px;font-size:14px;line-height:14px;letter-spacing:0.000px;color:#16171f;">Open</span>
<span class="t" style="left:1021.25px;top:730.74px;font-size:12px;line-height:12px;letter-spacing:0.531px;color:#747782;">orca-12833</span>
<span class="t" style="left:1174.00px;top:714.30px;font-size:14px;line-height:14px;letter-spacing:0.283px;color:#16171f;">2 years ago</span>
<span class="t" style="left:1174.00px;top:732.24px;font-size:12px;line-height:12px;letter-spacing:0.128px;color:#747782;">2021, Jan 6</span>
<span class="t" style="left:1305.00px;top:714.30px;font-size:14px;line-height:14px;letter-spacing:0.229px;color:#16171f;">19 hours ago</span>
<span class="t" style="left:1305.00px;top:732.24px;font-size:12px;line-height:12px;letter-spacing:0.220px;color:#747782;">2022, Oct 4</span>
<span class="t" style="left:1462.90px;top:722.62px;font-size:11.5px;line-height:11.5px;letter-spacing:0.380px;color:#16171f;">TAKE ACTION</span>
<span class="t" style="left:723.90px;top:717.99px;font-size:12px;line-height:12px;letter-spacing:0.478px;color:#1d2430;transform:scaleY(1.15);transform-origin:0 84.65%;-webkit-text-stroke:0.25px #1d2430;">aws</span>
<span class="t" style="left:156.50px;top:780.50px;font-size:14px;line-height:14px;letter-spacing:0.409px;color:#16171f;">Account without strong password policy</span>
<span class="t" style="left:156.50px;top:798.44px;font-size:12px;line-height:12px;letter-spacing:0.536px;color:#747782;">orca-375859</span>
<span class="t" style="left:523.75px;top:780.25px;font-size:14px;line-height:14px;letter-spacing:0.225px;color:#16171f;">PasswordPolicy</span>
<span class="t" style="left:523.75px;top:800.44px;font-size:12px;line-height:12px;letter-spacing:0.277px;color:#747782;">Aws Iam Password Policy</span>
<span class="t" style="left:759.00px;top:789.00px;font-size:14px;line-height:14px;letter-spacing:0.599px;color:#16171f;">331137037092</span>
<span class="t" style="left:1021.25px;top:780.50px;font-size:14px;line-height:14px;letter-spacing:0.000px;color:#16171f;">Open</span>
<span class="t" style="left:1021.25px;top:797.94px;font-size:12px;line-height:12px;letter-spacing:0.511px;color:#747782;">orca-375859</span>
<span class="t" style="left:1174.00px;top:781.50px;font-size:14px;line-height:14px;letter-spacing:0.416px;color:#16171f;">1 month ago</span>
<span class="t" style="left:1174.00px;top:799.44px;font-size:12px;line-height:12px;letter-spacing:0.479px;color:#747782;">2022, Aug 29</span>
<span class="t" style="left:1305.00px;top:781.50px;font-size:14px;line-height:14px;letter-spacing:0.229px;color:#16171f;">19 hours ago</span>
<span class="t" style="left:1305.00px;top:799.44px;font-size:12px;line-height:12px;letter-spacing:0.220px;color:#747782;">2022, Oct 4</span>
<span class="t" style="left:1462.90px;top:789.82px;font-size:11.5px;line-height:11.5px;letter-spacing:0.380px;color:#16171f;">TAKE ACTION</span>
<span class="t" style="left:723.90px;top:785.19px;font-size:12px;line-height:12px;letter-spacing:0.478px;color:#1d2430;transform:scaleY(1.15);transform-origin:0 84.65%;-webkit-text-stroke:0.25px #1d2430;">aws</span>
<span class="t" style="left:156.50px;top:847.70px;font-size:14px;line-height:14px;letter-spacing:0.409px;color:#16171f;">Account without strong password policy</span>
<span class="t" style="left:156.50px;top:865.64px;font-size:12px;line-height:12px;letter-spacing:0.559px;color:#747782;">orca-69834</span>
<span class="t" style="left:523.75px;top:847.45px;font-size:14px;line-height:14px;letter-spacing:0.225px;color:#16171f;">PasswordPolicy</span>
<span class="t" style="left:523.75px;top:867.64px;font-size:12px;line-height:12px;letter-spacing:0.277px;color:#747782;">Aws Iam Password Policy</span>
<span class="t" style="left:759.00px;top:856.20px;font-size:14px;line-height:14px;letter-spacing:0.506px;color:#16171f;">125532929533</span>
<span class="t" style="left:1021.25px;top:847.70px;font-size:14px;line-height:14px;letter-spacing:0.000px;color:#16171f;">Open</span>
<span class="t" style="left:1021.25px;top:865.14px;font-size:12px;line-height:12px;letter-spacing:0.531px;color:#747782;">orca-69834</span>
<span class="t" style="left:1174.00px;top:848.70px;font-size:14px;line-height:14px;letter-spacing:0.314px;color:#16171f;">1 year ago</span>
<span class="t" style="left:1174.00px;top:866.64px;font-size:12px;line-height:12px;letter-spacing:0.328px;color:#747782;">2021, Nov 17</span>
<span class="t" style="left:1305.00px;top:848.70px;font-size:14px;line-height:14px;letter-spacing:0.365px;color:#16171f;">10 months ago</span>
<span class="t" style="left:1305.00px;top:866.64px;font-size:12px;line-height:12px;letter-spacing:0.237px;color:#747782;">2021, Nov 27</span>
<span class="t" style="left:1462.90px;top:857.02px;font-size:11.5px;line-height:11.5px;letter-spacing:0.380px;color:#16171f;">TAKE ACTION</span>
<span class="t" style="left:723.90px;top:852.39px;font-size:12px;line-height:12px;letter-spacing:0.478px;color:#1d2430;transform:scaleY(1.15);transform-origin:0 84.65%;-webkit-text-stroke:0.25px #1d2430;">aws</span>
<span class="t" style="left:156.50px;top:914.90px;font-size:14px;line-height:14px;letter-spacing:0.409px;color:#16171f;">Account without strong password policy</span>
<span class="t" style="left:156.50px;top:932.84px;font-size:12px;line-height:12px;letter-spacing:0.536px;color:#747782;">orca-230146</span>
<span class="t" style="left:523.75px;top:914.65px;font-size:14px;line-height:14px;letter-spacing:0.225px;color:#16171f;">PasswordPolicy</span>
<span class="t" style="left:523.75px;top:934.84px;font-size:12px;line-height:12px;letter-spacing:0.277px;color:#747782;">Aws Iam Password Policy</span>
<span class="t" style="left:759.00px;top:923.40px;font-size:14px;line-height:14px;letter-spacing:0.506px;color:#16171f;">779829575369</span>
<span class="t" style="left:1021.25px;top:914.90px;font-size:14px;line-height:14px;letter-spacing:0.000px;color:#16171f;">Open</span>
<span class="t" style="left:1021.25px;top:932.34px;font-size:12px;line-height:12px;letter-spacing:0.511px;color:#747782;">orca-230146</span>
<span class="t" style="left:1174.00px;top:915.90px;font-size:14px;line-height:14px;letter-spacing:0.378px;color:#16171f;">4 months ago</span>
<span class="t" style="left:1174.00px;top:933.84px;font-size:12px;line-height:12px;letter-spacing:0.128px;color:#747782;">2022, Jun 6</span>
<span class="t" style="left:1305.00px;top:915.90px;font-size:14px;line-height:14px;letter-spacing:0.287px;color:#16171f;">3 months ago</span>
<span class="t" style="left:1305.00px;top:933.84px;font-size:12px;line-height:12px;letter-spacing:0.055px;color:#747782;">2022, Jul 19</span>
<span class="t" style="left:1462.90px;top:924.22px;font-size:11.5px;line-height:11.5px;letter-spacing:0.380px;color:#16171f;">TAKE ACTION</span>
<span class="t" style="left:723.90px;top:919.59px;font-size:12px;line-height:12px;letter-spacing:0.478px;color:#1d2430;transform:scaleY(1.15);transform-origin:0 84.65%;-webkit-text-stroke:0.25px #1d2430;">aws</span>
</div>
</body></html>
